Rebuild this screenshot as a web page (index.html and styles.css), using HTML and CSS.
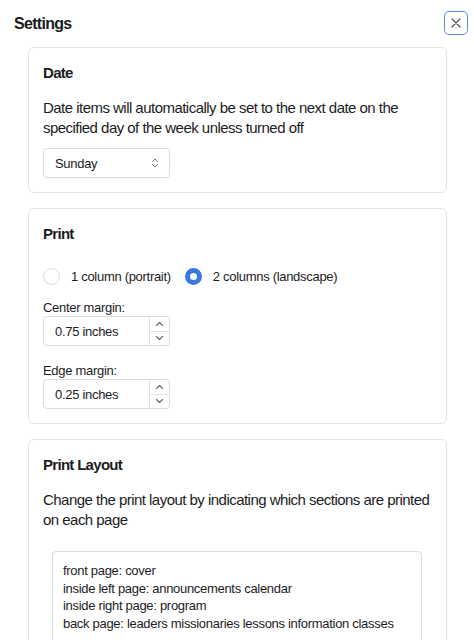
FILE: index.html
```html
<!DOCTYPE html>
<html>
<head>
<meta charset="utf-8">
<link rel="stylesheet" href="styles.css">
</head>
<body>
<div class="modal">
  <header class="modal-header">
    <h1 class="modal-title">Settings</h1>
    <button class="close-btn" aria-label="Close">
      <svg width="12" height="12" viewBox="0 0 12 12"><path d="M2 2L10 10M10 2L2 10" stroke="#555" stroke-width="1.2" stroke-linecap="round"/></svg>
    </button>
  </header>
  <div class="cards">
    <section class="card">
      <h2 class="card-title">Date</h2>
      <p class="card-text">Date items will automatically be set to the next date on the specified day of the week unless turned off</p>
      <div class="select">
        <span>Sunday</span>
        <svg width="8" height="12" viewBox="0 0 8 12"><path d="M1.5 4.5L4 2L6.5 4.5M1.5 7.5L4 10L6.5 7.5" fill="none" stroke="#777" stroke-width="1" stroke-linecap="round" stroke-linejoin="round"/></svg>
      </div>
    </section>
    <section class="card">
      <h2 class="card-title">Print</h2>
      <div class="radios">
        <label class="radio"><span class="radio-dot"></span>1 column (portrait)</label>
        <label class="radio"><span class="radio-dot checked"></span>2 columns (landscape)</label>
      </div>
      <div class="field">
        <div class="field-label">Center margin:</div>
        <div class="number">
          <span class="number-value">0.75 inches</span>
          <span class="spinner">
            <span class="spin"><svg width="9" height="6" viewBox="0 0 9 6"><path d="M1.5 4.5L4.5 1.5L7.5 4.5" fill="none" stroke="#666" stroke-width="1.1" stroke-linecap="round" stroke-linejoin="round"/></svg></span>
            <span class="spin"><svg width="9" height="6" viewBox="0 0 9 6"><path d="M1.5 1.5L4.5 4.5L7.5 1.5" fill="none" stroke="#666" stroke-width="1.1" stroke-linecap="round" stroke-linejoin="round"/></svg></span>
          </span>
        </div>
      </div>
      <div class="field">
        <div class="field-label">Edge margin:</div>
        <div class="number">
          <span class="number-value">0.25 inches</span>
          <span class="spinner">
            <span class="spin"><svg width="9" height="6" viewBox="0 0 9 6"><path d="M1.5 4.5L4.5 1.5L7.5 4.5" fill="none" stroke="#666" stroke-width="1.1" stroke-linecap="round" stroke-linejoin="round"/></svg></span>
            <span class="spin"><svg width="9" height="6" viewBox="0 0 9 6"><path d="M1.5 1.5L4.5 4.5L7.5 1.5" fill="none" stroke="#666" stroke-width="1.1" stroke-linecap="round" stroke-linejoin="round"/></svg></span>
          </span>
        </div>
      </div>
    </section>
    <section class="card">
      <h2 class="card-title">Print Layout</h2>
      <p class="card-text">Change the print layout by indicating which sections are printed on each page</p>
      <div class="textarea">
        <div>front page: cover</div>
        <div>inside left page: announcements calendar</div>
        <div>inside right page: program</div>
        <div>back page: leaders missionaries lessons information classes</div>
      </div>
    </section>
  </div>
</div>
</body>
</html>
```

FILE: styles.css
```css
* { box-sizing: border-box; }
html, body { margin: 0; padding: 0; background: #fff; }
body {
  font-family: "Liberation Sans", Arial, sans-serif;
  color: #1c1c1e;
  overflow: hidden;
  height: 640px;
}
.modal { padding: 11px 6px 0 14px; }
.modal-header {
  display: flex;
  justify-content: space-between;
  align-items: center;
  height: 24px;
}
.modal-title { margin: 0; font-size: 16px; font-weight: 700; line-height: 24px; letter-spacing: -0.7px; padding-top: 1px; }
.close-btn {
  width: 24px; height: 24px;
  border: 1.5px solid #5a8fdc;
  border-radius: 5px;
  background: #fff;
  display: flex; align-items: center; justify-content: center;
  padding: 0;
}
.cards {
  display: flex; flex-direction: column; gap: 15px;
  margin: 12px 21px 0 14px;
}
.card {
  border: 1px solid #e3e3e3;
  border-radius: 6px;
  padding: 14px 12px 14px 14px;
}
.card-title { margin: 0; font-size: 15px; font-weight: 700; line-height: 22px; letter-spacing: -0.7px; }
.card-text { margin: 14px 0 0; font-size: 15px; line-height: 20px; letter-spacing: -0.53px; }
.select {
  margin-top: 10px;
  width: 127px; height: 30px;
  border: 1px solid #dcdcdc;
  border-radius: 4px;
  box-shadow: 0 1px 1px rgba(0,0,0,0.04);
  display: flex; align-items: center; justify-content: space-between;
  padding: 0 10px 0 11px;
  font-size: 13px;
  letter-spacing: -0.3px;
}
.radios { display: flex; align-items: center; gap: 14px; margin-top: 22px; height: 18px; font-size: 13px; letter-spacing: -0.3px; }
.radio { display: flex; align-items: center; gap: 11px; }
.radio-dot {
  width: 17px; height: 17px; border-radius: 50%;
  border: 1px solid #dadada; background: #fff;
}
.radio-dot.checked { border: 5px solid #3a7ae0; }
.field { margin-top: 15px; }
.field + .field { margin-top: 17px; }
.field-label { font-size: 13px; line-height: 16px; letter-spacing: -0.3px; }
.number {
  margin-top: 0;
  width: 127px; height: 30px;
  border: 1px solid #dcdcdc;
  border-radius: 4px;
  display: flex;
  font-size: 13px;
  letter-spacing: -0.3px;
}
.number-value { flex: 1; display: flex; align-items: center; padding-left: 11px; }
.spinner { width: 20px; border-left: 1px solid #e2e2e2; display: flex; flex-direction: column; }
.spin { flex: 1; display: flex; align-items: center; justify-content: center; }
.spin + .spin { border-top: 1px solid #e2e2e2; }
.textarea {
  margin: 21px 12px 0 9px;
  border: 1px solid #dcdcdc;
  border-radius: 4px;
  padding: 10px 10px 30px;
  font-size: 13px;
  line-height: 17.7px;
  letter-spacing: -0.3px;
}
```
